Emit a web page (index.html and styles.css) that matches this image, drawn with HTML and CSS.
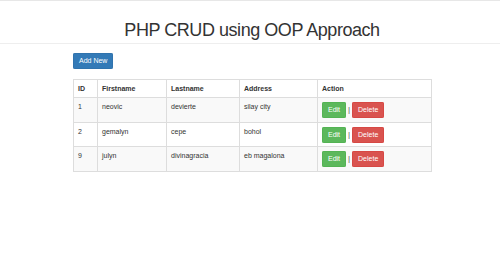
FILE: index.html
```html
<!DOCTYPE html>
<html>
<head>
<meta charset="utf-8">
<link rel="stylesheet" href="styles.css">
</head>
<body>
<div class="topbar"></div>
<header class="page-header">
  <h1>PHP CRUD using OOP Approach</h1>
</header>
<main class="content">
  <a class="btn btn-primary add-btn" href="#">Add New</a>
  <table class="crud-table">
    <colgroup>
      <col class="c-id"><col class="c-first"><col class="c-last"><col class="c-addr"><col class="c-action">
    </colgroup>
    <thead>
      <tr><th>ID</th><th>Firstname</th><th>Lastname</th><th>Address</th><th>Action</th></tr>
    </thead>
    <tbody>
      <tr>
        <td>1</td><td>neovic</td><td>devierte</td><td>silay city</td>
        <td class="actions"><a class="btn btn-success" href="#">Edit</a> <span class="sep">|</span> <a class="btn btn-danger" href="#">Delete</a></td>
      </tr>
      <tr>
        <td>2</td><td>gemalyn</td><td>cepe</td><td>bohol</td>
        <td class="actions"><a class="btn btn-success" href="#">Edit</a> <span class="sep">|</span> <a class="btn btn-danger" href="#">Delete</a></td>
      </tr>
      <tr>
        <td>9</td><td>julyn</td><td>divinagracia</td><td>eb magalona</td>
        <td class="actions"><a class="btn btn-success" href="#">Edit</a> <span class="sep">|</span> <a class="btn btn-danger" href="#">Delete</a></td>
      </tr>
    </tbody>
  </table>
</main>
</body>
</html>
```

FILE: styles.css
```css
html, body {
  margin: 0;
  padding: 0;
  background: #fff;
}
body {
  font-family: "Liberation Sans", Arial, sans-serif;
  color: #333;
  font-size: 7px;
  line-height: 10px;
}
.topbar {
  height: 1px;
  background: #e7e7e7;
}
.page-header {
  border-bottom: 1px solid #eee;
  padding-bottom: 3px;
  text-align: center;
}
.page-header h1 {
  margin: 19px 0 0;
  padding-left: 4px;
  font-size: 18px;
  line-height: 20px;
  letter-spacing: -0.45px;
  font-weight: normal;
  color: #333;
}
.content {
  margin-left: 73px;
  width: 358px;
  padding-top: 9px;
}
.btn {
  display: inline-block;
  padding: 3px 6px;
  font-size: 7px;
  line-height: 10px;
  color: #fff;
  text-decoration: none;
  border-radius: 2px;
  vertical-align: top;
}
.btn-primary { background: #337ab7; box-shadow: inset 0 0 0 0.5px #2e6da4; }
.btn-success { background: #5cb85c; box-shadow: inset 0 0 0 0.5px #4cae4c; }
.btn-danger { background: #d9534f; box-shadow: inset 0 0 0 0.5px #d43f3a; }
.add-btn {
  margin-bottom: 10px;
}
.crud-table {
  width: 358px;
  table-layout: fixed;
  border-collapse: collapse;
  border: 1px solid #ddd;
}
.c-id { width: 24px; }
.c-first { width: 69px; }
.c-last { width: 73px; }
.c-addr { width: 78px; }
.c-action { width: 114px; }
.crud-table th,
.crud-table td {
  border: 1px solid #ddd;
  padding: 4px 4px 3px;
  text-align: left;
  vertical-align: top;
  line-height: 10px;
}
.crud-table td.actions {
  line-height: 16px;
  padding-bottom: 3.5px;
}
.crud-table th {
  font-weight: bold;
}
.crud-table tbody tr:nth-child(odd) {
  background: #f9f9f9;
}
.sep {
  display: inline-block;
  color: #555;
  font-size: 8px;
  line-height: 16px;
  vertical-align: top;
}
```
